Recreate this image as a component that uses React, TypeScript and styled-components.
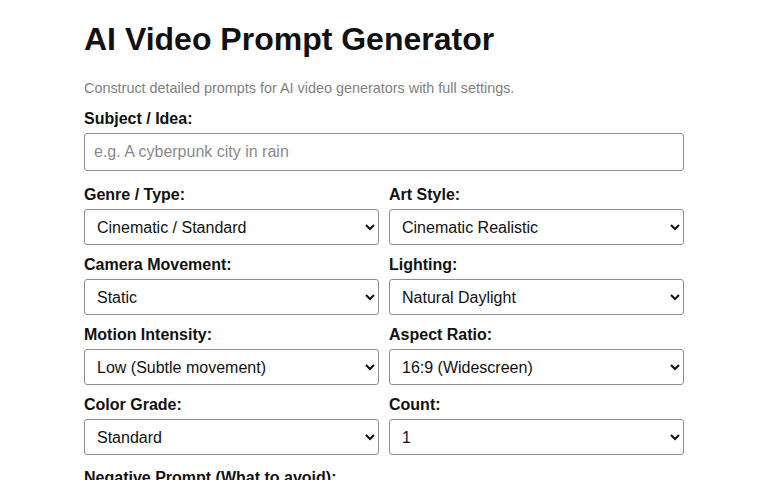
import React from "react";
import styled, { createGlobalStyle } from "styled-components";

const GlobalStyle = createGlobalStyle`
  html, body {
    margin: 0;
    padding: 0;
    background: #ffffff;
  }
  body {
    font-family: "Liberation Sans", Arial, sans-serif;
    color: #111;
  }
`;

const Page = styled.main`
  max-width: 600px;
  margin: 0 auto;
  padding-top: 20px;
`;

const Title = styled.h1`
  margin: 0;
  font-size: 32px;
  font-weight: 700;
  line-height: 38px;
  color: #111;
`;

const Subtitle = styled.p`
  margin: 22px 0 0;
  font-size: 14.4px;
  line-height: 17px;
  color: #808080;
`;

const Field = styled.div`
  display: flex;
  flex-direction: column;
  gap: 5px;
`;

const Section = styled.div<{ $top: number }>`
  margin-top: ${(p) => p.$top}px;
`;

const Grid = styled.div`
  display: grid;
  grid-template-columns: 1fr 1fr;
  column-gap: 10px;
  row-gap: 11px;
`;

const Label = styled.label`
  font-size: 16px;
  font-weight: 700;
  line-height: 18px;
  color: #111;
`;

const TextInput = styled.input`
  box-sizing: border-box;
  width: 100%;
  height: 38px;
  padding: 0 9px;
  font-family: "Liberation Sans", Arial, sans-serif;
  font-size: 16px;
  color: #111;
  border: 1px solid #8f8f8f;
  border-radius: 3px;
  outline: none;
  &::placeholder {
    color: #8a8a8a;
  }
`;

const Select = styled.select`
  box-sizing: border-box;
  width: 100%;
  height: 36px;
  padding: 0 8px;
  font-family: "Liberation Sans", Arial, sans-serif;
  font-size: 16px;
  color: #111;
  background: #fff;
  border: 1px solid #8f8f8f;
  border-radius: 3px;
`;

type Option = { label: string; options: string[] };

const settings: Option[] = [
  { label: "Genre / Type:", options: ["Cinematic / Standard", "Documentary", "Music Video", "Commercial", "Anime"] },
  { label: "Art Style:", options: ["Cinematic Realistic", "3D Render", "Watercolor", "Claymation"] },
  { label: "Camera Movement:", options: ["Static", "Pan Left", "Pan Right", "Dolly Zoom", "Drone Flyover"] },
  { label: "Lighting:", options: ["Natural Daylight", "Golden Hour", "Neon", "Studio"] },
  { label: "Motion Intensity:", options: ["Low (Subtle movement)", "Medium", "High (Fast action)"] },
  { label: "Aspect Ratio:", options: ["16:9 (Widescreen)", "9:16 (Vertical)", "1:1 (Square)", "21:9 (Ultrawide)"] },
  { label: "Color Grade:", options: ["Standard", "Teal & Orange", "Black & White", "Vintage"] },
  { label: "Count:", options: ["1", "2", "3", "4", "5"] },
];

export default function App() {
  return (
    <>
      <GlobalStyle />
      <Page>
        <Title>AI Video Prompt Generator</Title>
        <Subtitle>Construct detailed prompts for AI video generators with full settings.</Subtitle>

        <Section $top={13}>
          <Field>
            <Label htmlFor="subject">Subject / Idea:</Label>
            <TextInput id="subject" type="text" placeholder="e.g. A cyberpunk city in rain" />
          </Field>
        </Section>

        <Section $top={15}>
          <Grid>
            {settings.map((s, i) => (
              <Field key={s.label}>
                <Label htmlFor={`opt-${i}`}>{s.label}</Label>
                <Select id={`opt-${i}`} defaultValue={s.options[0]}>
                  {s.options.map((o) => (
                    <option key={o} value={o}>
                      {o}
                    </option>
                  ))}
                </Select>
              </Field>
            ))}
          </Grid>
        </Section>

        <Section $top={14}>
          <Field>
            <Label htmlFor="negative">Negative Prompt (What to avoid):</Label>
          </Field>
        </Section>
      </Page>
    </>
  );
}
